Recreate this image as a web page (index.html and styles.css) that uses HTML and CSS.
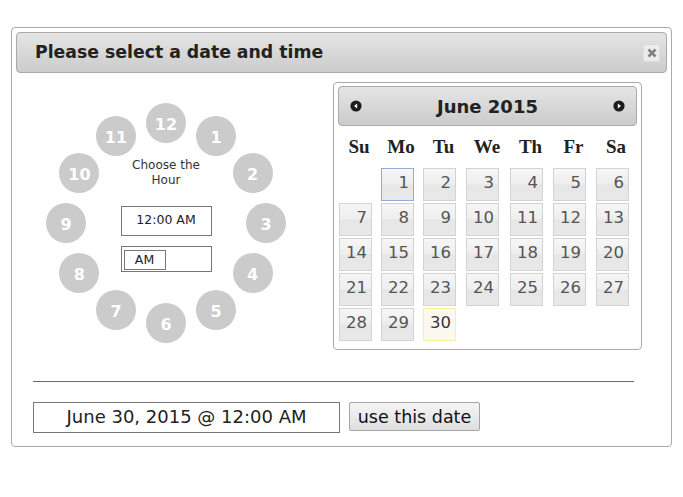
FILE: index.html
```html
<!DOCTYPE html>
<html>
<head>
<meta charset="utf-8">
<link rel="stylesheet" href="styles.css">
</head>
<body>
<div class="page">
  <div class="dialog">
    <div class="titlebar">
      <span class="title">Please select a date and time</span>
      <span class="close"><svg width="10" height="10" viewBox="0 0 10 10"><path d="M1.5 1.5 L8.5 8.5 M8.5 1.5 L1.5 8.5" stroke="#808080" stroke-width="2.6" stroke-linecap="butt"/></svg></span>
    </div>
    <div class="content">
      <div class="clock">
        <div class="hour h12">12</div>
        <div class="hour h1">1</div>
        <div class="hour h2">2</div>
        <div class="hour h3">3</div>
        <div class="hour h4">4</div>
        <div class="hour h5">5</div>
        <div class="hour h6">6</div>
        <div class="hour h7">7</div>
        <div class="hour h8">8</div>
        <div class="hour h9">9</div>
        <div class="hour h10">10</div>
        <div class="hour h11">11</div>
        <div class="choose">Choose the Hour</div>
        <div class="time-box">12:00 AM</div>
        <div class="ampm-box"><span class="ampm">AM</span></div>
      </div>
      <div class="cal">
        <div class="cal-head">
          <span class="nav"><svg width="12" height="12" viewBox="0 0 12 12"><circle cx="6" cy="6" r="5.6" fill="#1c1c1c"/><path d="M4 6 L7.2 3.6 L7.2 8.4 Z" fill="#fff"/></svg></span>
          <span class="month">June 2015</span>
          <span class="nav"><svg width="12" height="12" viewBox="0 0 12 12"><circle cx="6" cy="6" r="5.6" fill="#1c1c1c"/><path d="M8 6 L4.8 3.6 L4.8 8.4 Z" fill="#fff"/></svg></span>
        </div>
        <div class="grid">
          <div class="wd">Su</div><div class="wd">Mo</div><div class="wd">Tu</div><div class="wd">We</div><div class="wd">Th</div><div class="wd">Fr</div><div class="wd">Sa</div>
          <div class="day active first">1</div><div class="day">2</div><div class="day">3</div><div class="day">4</div><div class="day">5</div><div class="day">6</div>
          <div class="day">7</div><div class="day">8</div><div class="day">9</div><div class="day">10</div><div class="day">11</div><div class="day">12</div><div class="day">13</div>
          <div class="day">14</div><div class="day">15</div><div class="day">16</div><div class="day">17</div><div class="day">18</div><div class="day">19</div><div class="day">20</div>
          <div class="day">21</div><div class="day">22</div><div class="day">23</div><div class="day">24</div><div class="day">25</div><div class="day">26</div><div class="day">27</div>
          <div class="day">28</div><div class="day">29</div><div class="day today">30</div>
        </div>
      </div>
    </div>
    <div class="rule"></div>
    <div class="footer">
      <div class="result">June 30, 2015 @ 12:00 AM</div>
      <button class="use">use this date</button>
    </div>
  </div>
</div>
</body>
</html>
```

FILE: styles.css
```css
html, body {
  margin: 0;
  padding: 0;
  background: #fff;
}
body {
  font-family: "DejaVu Sans", Verdana, sans-serif;
  color: #222;
}
.page {
  padding: 27px 0 0 11px;
}
.dialog {
  box-sizing: border-box;
  width: 661px;
  height: 420px;
  border: 1px solid #aaa;
  border-radius: 4px;
  padding: 4px;
}
.titlebar {
  box-sizing: border-box;
  height: 41px;
  border: 1px solid #aaa;
  border-radius: 4px;
  background: linear-gradient(#e5e5e5, #cbcbcb);
  display: flex;
  align-items: center;
  justify-content: space-between;
  padding: 0 6px 0 18px;
}
.title {
  font-weight: bold;
  font-size: 17.3px;
  color: #222;
  position: relative;
  top: -1px;
}
.close {
  box-sizing: border-box;
  width: 17px;
  height: 18px;
  background: #ececec;
  border: 1px solid #dcdcdc;
  border-radius: 2px;
  display: flex;
  align-items: center;
  justify-content: center;
}
.content {
  display: flex;
  align-items: flex-start;
}
.clock {
  position: relative;
  width: 240px;
  height: 240px;
  margin: 30px 0 0 30px;
  display: flex;
  flex-direction: column;
  align-items: center;
}
.hour {
  position: absolute;
  width: 40px;
  height: 40px;
  margin: -20px 0 0 -20px;
  border-radius: 50%;
  background: #cbcbcb;
  color: #fff;
  font-weight: bold;
  font-size: 16px;
  line-height: 43px;
  text-align: center;
}
.h12 { left: 120px; top: 20px; }
.h1  { left: 170px; top: 33.4px; }
.h2  { left: 206.6px; top: 70px; }
.h3  { left: 220px; top: 120px; }
.h4  { left: 206.6px; top: 170px; }
.h5  { left: 170px; top: 206.6px; }
.h6  { left: 120px; top: 220px; }
.h7  { left: 70px; top: 206.6px; }
.h8  { left: 33.4px; top: 170px; }
.h9  { left: 20px; top: 120px; }
.h10 { left: 33.4px; top: 70px; }
.h11 { left: 70px; top: 33.4px; }
.choose {
  margin-top: 55px;
  width: 80px;
  font-size: 12px;
  line-height: 15px;
  text-align: center;
  color: #333;
}
.time-box {
  box-sizing: border-box;
  margin-top: 18px;
  width: 91px;
  height: 30px;
  border: 1px solid #777;
  font-size: 12.5px;
  line-height: 25px;
  text-align: center;
  color: #222;
}
.ampm-box {
  box-sizing: border-box;
  margin-top: 10px;
  width: 91px;
  height: 26px;
  border: 1px solid #777;
  padding: 3px 0 0 2px;
  display: flex;
}
.ampm {
  box-sizing: border-box;
  width: 42px;
  height: 20px;
  border: 1px solid #777;
  font-size: 12.5px;
  line-height: 18px;
  text-align: center;
  color: #222;
}
.cal {
  box-sizing: border-box;
  width: 309px;
  height: 268px;
  margin: 9px 0 0 47px;
  border: 1px solid #aaa;
  border-radius: 4px;
  padding: 3px 4px 8px 4px;
}
.cal-head {
  box-sizing: border-box;
  height: 40px;
  border: 1px solid #aaa;
  border-radius: 4px;
  background: linear-gradient(#e5e5e5, #cbcbcb);
  display: flex;
  align-items: center;
  justify-content: space-between;
  padding: 0 11px 0 11px;
}
.nav {
  display: flex;
  width: 12px;
  height: 12px;
}
.month {
  font-weight: bold;
  font-size: 18px;
  color: #222;
}
.grid {
  display: grid;
  grid-template-columns: 42px 42px 43px 44px 43px 43px 42px;
  grid-template-rows: 40px;
  grid-auto-rows: 33px;
  row-gap: 2px;
}
.wd {
  font-family: "Liberation Serif", "Times New Roman", serif;
  font-weight: bold;
  font-size: 19px;
  color: #222;
  text-align: center;
  line-height: 42px;
  height: 40px;
}
.day {
  box-sizing: border-box;
  width: 33px;
  height: 33px;
  margin-left: 1px;
  border: 1px solid #d3d3d3;
  background: linear-gradient(#f6f6f6 0%, #eeeeee 48%, #e6e6e6 52%, #e9e9e9 100%);
  color: #555;
  font-size: 16.5px;
  line-height: 28px;
  text-align: right;
  padding-right: 4px;
}
.first {
  grid-column-start: 2;
}
.active {
  border-color: #8eaed6;
}
.today {
  border-color: #fcefa1;
  background: #fbf9ee;
  color: #363636;
}
.rule {
  margin: 31px 0 0 17px;
  width: 601px;
  height: 1px;
  background: #6a6a6a;
}
.footer {
  display: flex;
  align-items: flex-start;
  margin: 20px 0 0 17px;
}
.result {
  box-sizing: border-box;
  width: 307px;
  height: 31px;
  border: 1px solid #777;
  font-size: 18px;
  line-height: 28px;
  text-align: center;
  color: #222;
}
.use {
  box-sizing: border-box;
  margin-left: 9px;
  width: 131px;
  height: 29px;
  border: 1px solid #a5a5a5;
  border-radius: 2px;
  background: linear-gradient(#f5f5f5, #dedede);
  font-family: "DejaVu Sans", Tahoma, sans-serif;
  font-size: 17.5px;
  color: #111;
  padding: 0;
  line-height: 26px;
}
```
